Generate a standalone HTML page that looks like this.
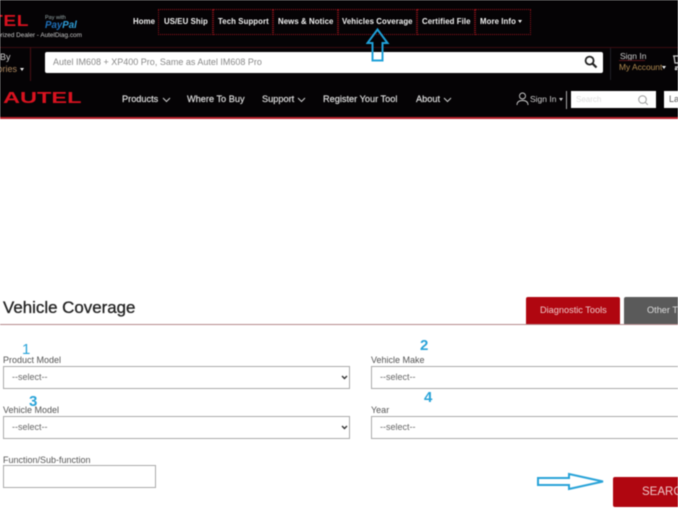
<!DOCTYPE html>
<html>
<head>
<meta charset="utf-8">
<style>
html,body{margin:0;padding:0;background:#fff}
#p{position:relative;width:678px;height:509px;overflow:hidden;background:#fff;font-family:"Liberation Sans",sans-serif;filter:blur(.45px)}
#p div,#p svg{position:absolute}
.t{white-space:nowrap;line-height:1}
.nb{font-weight:bold;font-size:7.8px;color:#f2f2f2;top:18px;letter-spacing:.1px}
.db{border:1px dotted #8c1019;top:9px;height:24px;box-sizing:content-box}
.nv{font-size:9.2px;color:#e2e2e2;top:94.5px;-webkit-text-stroke:.15px #e2e2e2}
.lb{font-size:9px;color:#555}
.sel{background:#fff;border:1px solid #aaa;box-sizing:border-box;height:23px;font-size:9px;color:#666;line-height:21px;padding-left:8px}
.num{color:#29a3d8;font-size:15px;font-weight:bold}
</style>
</head>
<body>
<div id="p">
<div style="left:0;top:0;width:678px;height:118px;background:#050305"></div>
<div style="left:0;top:47px;width:678px;height:1px;background:#3a0b10"></div>
<div style="left:0;top:117px;width:678px;height:1.5px;background:#b8202a"></div>

<div class="t" style="left:-9px;top:14px;font-size:16px;font-weight:bold;color:#d8121f;letter-spacing:.5px;transform:scaleX(1.2);transform-origin:left">TEL</div>
<div class="t" style="left:45px;top:16px;font-size:5.5px;color:#9aa">Pay with</div>
<div class="t" style="left:45px;top:21px;font-size:9.700px;font-weight:bold;font-style:italic;color:#1e6fb8">Pay<span style="color:#2f9fd8">Pal</span></div>
<div class="t" style="left:-3px;top:33px;font-size:6.400px;color:#c8c8c8">orized Dealer - AutelDiag.com</div>

<div class="t nb" style="left:133px">Home</div>
<div class="db" style="left:158px;width:53px"></div>
<div class="db" style="left:213px;width:58px"></div>
<div class="db" style="left:273px;width:63px"></div>
<div class="db" style="left:338px;width:77px"></div>
<div class="db" style="left:417px;width:56px"></div>
<div class="db" style="left:475px;width:54px"></div>
<div class="t nb" style="left:164px">US/EU Ship</div>
<div class="t nb" style="left:218px">Tech Support</div>
<div class="t nb" style="left:278px">News &amp; Notice</div>
<div class="t nb" style="left:342px">Vehicles Coverage</div>
<div class="t nb" style="left:422px">Certified File</div>
<div class="t nb" style="left:480px">More Info</div>
<div style="left:518px;top:20px;width:0;height:0;border:2.5px solid transparent;border-top:3px solid #eee"></div>

<div class="t" style="left:0;top:53px;font-size:9px;color:#ccc">By</div>
<div class="t" style="left:-5px;top:65px;font-size:9px;color:#b08a60">tories</div>
<div style="left:20px;top:68px;width:0;height:0;border:2.5px solid transparent;border-top:3px solid #eee"></div>
<div style="left:30px;top:47px;width:1px;height:34px;background:#4a0f14"></div>

<div style="left:45px;top:52px;width:558px;height:21px;background:#fff;border-radius:2px"></div>
<div class="t" style="left:53px;top:58px;font-size:9px;color:#888">Autel IM608 + XP400 Pro, Same as Autel IM608 Pro</div>
<svg style="left:584px;top:55px" width="14" height="14" viewBox="0 0 14 14"><circle cx="5.600" cy="5.600" r="4" fill="none" stroke="#222" stroke-width="1.800"/><path d="M8.600 8.600 L12.500 12.500" stroke="#222" stroke-width="2.200"/></svg>

<svg style="left:366px;top:28px" width="24" height="36" viewBox="0 0 24 36"><path d="M11.500 1.500 L21.500 15 H16.500 V32.500 H6.500 V15 H1.500 Z" fill="none" stroke="#1fa0d8" stroke-width="2"/></svg>

<div style="left:610px;top:48px;width:1px;height:32px;background:#202028"></div>
<div class="t" style="left:620px;top:52px;font-size:8.500px;color:#ccc">Sign In</div>
<div style="left:619px;top:60px;width:26px;height:1px;background:#55141a"></div>
<div class="t" style="left:619px;top:63px;font-size:8.400px;color:#b08a50">My Account</div>
<div style="left:662px;top:66px;width:0;height:0;border:2.500px solid transparent;border-top:3px solid #eee"></div>
<svg style="left:673px;top:54px" width="8" height="18" viewBox="0 0 8 18"><path d="M0 2 H7 V9 H2 L1 2 M2 13 H7" fill="none" stroke="#ccc" stroke-width="1.200"/><circle cx="3" cy="15" r="1.300" fill="#ccc"/></svg>

<div class="t" style="left:3px;top:91px;font-size:15.500px;font-weight:bold;color:#d8121f;transform:scaleX(1.52);transform-origin:left">AUTEL</div>

<div class="t nv" style="left:122px">Products</div>
<svg style="left:162px;top:97px" width="9" height="6" viewBox="0 0 9 6"><path d="M1 1 L4.500 4.500 L8 1" fill="none" stroke="#ccc" stroke-width="1"/></svg>
<div class="t nv" style="left:187px">Where To Buy</div>
<div class="t nv" style="left:262px">Support</div>
<svg style="left:297px;top:97px" width="9" height="6" viewBox="0 0 9 6"><path d="M1 1 L4.500 4.500 L8 1" fill="none" stroke="#ccc" stroke-width="1"/></svg>
<div class="t nv" style="left:323px">Register Your Tool</div>
<div class="t nv" style="left:416px">About</div>
<svg style="left:443px;top:97px" width="9" height="6" viewBox="0 0 9 6"><path d="M1 1 L4.500 4.500 L8 1" fill="none" stroke="#ccc" stroke-width="1"/></svg>

<svg style="left:516px;top:92px" width="13" height="14" viewBox="0 0 13 14"><circle cx="6.500" cy="4" r="3" fill="none" stroke="#ccc" stroke-width=".9"/><path d="M1 13 C1 9 4 8.500 6.500 8.500 C9 8.500 12 9 12 13" fill="none" stroke="#ccc" stroke-width=".9"/></svg>
<div class="t" style="left:530px;top:95px;font-size:8.500px;color:#ccc">Sign In</div>
<div style="left:559px;top:98px;width:0;height:0;border:2px solid transparent;border-top:3px solid #ccc"></div>
<div style="left:566px;top:91px;width:1px;height:18px;background:#aaa"></div>
<div style="left:571px;top:91px;width:85px;height:17px;background:#fff"></div>
<div class="t" style="left:576px;top:96px;font-size:8px;color:#ddd">Search</div>
<svg style="left:637px;top:94px" width="12" height="12" viewBox="0 0 12 12"><circle cx="5.500" cy="5.500" r="3.800" fill="none" stroke="#999" stroke-width="1"/><path d="M8.200 8.200 L10.800 10.800" stroke="#999" stroke-width="1"/></svg>
<div style="left:664px;top:91px;width:20px;height:17px;background:#fff"></div>
<div class="t" style="left:669px;top:95px;font-size:9px;color:#555">La</div>

<div class="t" style="left:3px;top:299.500px;font-size:16.900px;color:#222;-webkit-text-stroke:.3px #222">Vehicle Coverage</div>
<div style="left:0;top:323.500px;width:678px;height:1px;background:#b58a8c"></div>
<div style="left:526px;top:297px;width:94px;height:27px;background:#b00610;border-radius:2px 2px 0 0"></div>
<div class="t" style="left:540px;top:306px;font-size:9.200px;color:#eec8c8">Diagnostic Tools</div>
<div style="left:624px;top:297px;width:60px;height:27px;background:#5a5a5a;border-radius:2px 2px 0 0"></div>
<div class="t" style="left:647px;top:306px;font-size:9.200px;color:#ddd">Other T</div>

<div class="t num" style="left:22px;top:342px;font-weight:normal">1</div>
<div class="t lb" style="left:3px;top:356px">Product Model</div>
<div class="sel" style="left:3px;top:366px;width:347px">--select--</div>
<svg style="left:341px;top:375px" width="7" height="5" viewBox="0 0 7 5"><path d="M1 1 L3.500 3.500 L6 1" fill="none" stroke="#333" stroke-width="1.400"/></svg>

<div class="t num" style="left:420px;top:338px">2</div>
<div class="t lb" style="left:371px;top:356px">Vehicle Make</div>
<div class="sel" style="left:371px;top:366px;width:320px">--select--</div>

<div class="t num" style="left:29px;top:394px">3</div>
<div class="t lb" style="left:3px;top:406px">Vehicle Model</div>
<div class="sel" style="left:3px;top:415.500px;width:347px">--select--</div>
<svg style="left:341px;top:425px" width="7" height="5" viewBox="0 0 7 5"><path d="M1 1 L3.500 3.500 L6 1" fill="none" stroke="#333" stroke-width="1.400"/></svg>

<div class="t num" style="left:424px;top:390px">4</div>
<div class="t lb" style="left:371px;top:406px">Year</div>
<div class="sel" style="left:371px;top:415.500px;width:320px">--select--</div>

<div class="t lb" style="left:3px;top:456px">Function/Sub-function</div>
<div style="left:3px;top:465px;width:153px;height:23px;background:#fff;border:1px solid #aaa;box-sizing:border-box"></div>

<svg style="left:536px;top:472px" width="72" height="20" viewBox="0 0 72 20"><path d="M2 6 H33 V2 L67 9.500 L33 17 V13 H2 Z" fill="none" stroke="#29a3d8" stroke-width="2"/></svg>
<div style="left:613px;top:477px;width:80px;height:30px;background:#b00610;border-radius:2px"></div>
<div class="t" style="left:642px;top:486.500px;font-size:11.500px;color:#eec8c8">SEARCH</div>
</div>
</body>
</html>
